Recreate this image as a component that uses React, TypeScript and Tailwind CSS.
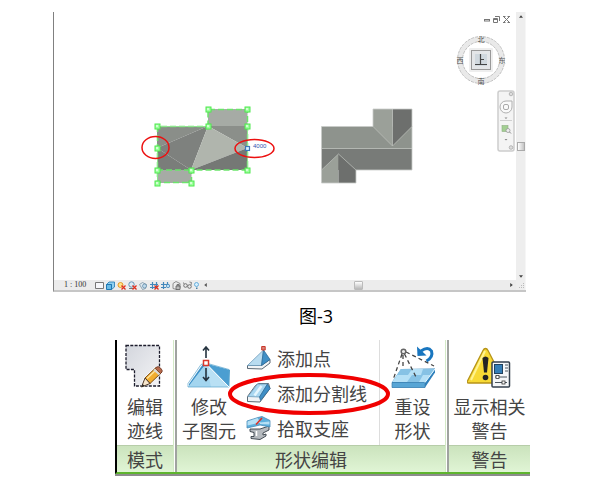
import type { ReactNode } from "react";

const handles = [
  [157, 126],
  [208, 126],
  [208, 109],
  [247, 109],
  [247, 126],
  [247, 170],
  [191, 170],
  [191, 183],
  [157, 183],
  [157, 170],
  [157, 148],
];

function EditedRoof() {
  return (
    <svg viewBox="140 100 136 90" className="h-[90px] w-[136px] shrink-0" fill="none">
      <path d="M208 109h39.500v17.500H208zM157 170h34.500v13H157z" fill="#a6aba5" />
      <path d="M157 126h51l-51 22z" fill="#8a8e89" />
      <path d="M157 148l51-22-17 44z" fill="#7e817e" />
      <path d="M157 148v22h34z" fill="#7a7d7a" />
      <path d="M208 126h39.500v22z" fill="#8b8f8a" />
      <path d="M208 126l39.500 22-56.500 22z" fill="#b0b5ad" />
      <path d="M191 170l56.500-22v22z" fill="#757875" />
      <path
        d="M208 126.500V109.500H247.500V170H191.500V182.500H157.500V126.500H208M157 170h34"
        stroke="#6be56b"
        strokeWidth="1.500"
        strokeDasharray="6 3"
      />
      <path d="M157 126.500h51M247.500 126v44M157.500 148v35" stroke="#8fe58f" strokeWidth="1" />
      {handles.map(([x, y]) => (
        <g key={`${x}-${y}`}>
          <rect x={x - 2} y={y - 2} width="5" height="5" fill="#9dff9d" stroke="#4fe84f" />
          <rect x={x - 1} y={y - 1} width="2" height="2" fill="#d2ffd2" />
        </g>
      ))}
      <rect x="245.500" y="146.500" width="4" height="4" fill="#d9efff" stroke="#3c78b8" strokeWidth="1.200" />
      <text x="253" y="147.500" fontSize="6" fill="#2f56b0" fontFamily="Liberation Sans, sans-serif">
        4000
      </text>
      <ellipse cx="155.500" cy="147.500" rx="13.500" ry="11" stroke="#ec1010" strokeWidth="1.500" />
      <ellipse cx="254.500" cy="148.500" rx="19.500" ry="9" stroke="#ec1010" strokeWidth="1.500" />
    </svg>
  );
}

function FinishedRoof() {
  return (
    <svg viewBox="320 100 94 90" className="h-[90px] w-[94px] shrink-0" fill="none">
      <path d="M321.500 126.500H412v22H321.500z" fill="#8e938d" />
      <path d="M321.500 148.500H412V170H321.500z" fill="#787b78" />
      <path d="M373 109h19.500v37L373 126.500z" fill="#9ba099" />
      <path d="M392.500 109H412v17.500L392.500 146z" fill="#6d6f6d" />
      <path d="M321.500 170l17-16v29h-17z" fill="#9ba099" />
      <path d="M338.500 154l17.500 16v13h-17.500z" fill="#6d6f6d" />
      <path d="M321.500 148.500H412M392.500 109v37M373 126.500l19.500 19.500 19.500-19.500M321.500 170l17-16 17.500 16" stroke="#b9bdb7" strokeWidth=".8" />
      <path d="M373 109H412V170H356V183H321.500V126.500H373z" stroke="#c9cbc9" strokeWidth=".8" />
    </svg>
  );
}

function WindowButtons() {
  return (
    <div className="flex items-center gap-[3px] pr-[6px] text-[#777]">
      <button aria-label="最小化">
        <svg viewBox="0 0 6 7" className="h-[7px] w-[6px]" fill="none" stroke="currentColor">
          <rect x=".5" y="3.500" width="5" height="1.500" />
        </svg>
      </button>
      <button aria-label="还原">
        <svg viewBox="0 0 7 7" className="h-[7px] w-[7px]" fill="none" stroke="currentColor">
          <path d="M.5 2.500h4v4h-4zM2 .5h4.500v4.500M.5 3.500h4" />
        </svg>
      </button>
      <button aria-label="关闭">
        <svg viewBox="0 0 7 7" className="h-[7px] w-[7px]" fill="none" stroke="currentColor">
          <path d="M1 1l5 5M6 1l-5 5M0 .5h2.500M4.500 .5H7M0 6.500h2.500M4.500 6.500H7" />
        </svg>
      </button>
    </div>
  );
}

function ViewCube() {
  return (
    <svg viewBox="0 0 52 52" className="h-[52px] w-[52px]" fontFamily="Noto Sans CJK SC, sans-serif" textAnchor="middle">
      <circle cx="26" cy="26" r="21" fill="none" stroke="#e9e9e9" strokeWidth="5" />
      <circle cx="26" cy="26" r="23.500" fill="none" stroke="#aaa" strokeWidth=".7" strokeDasharray="3 1" />
      <circle cx="26" cy="26" r="18.500" fill="none" stroke="#aaa" strokeWidth=".7" strokeDasharray="3 1" />
      <rect x="14" y="14" width="24" height="24" rx="1" fill="#eee" />
      <rect x="16.500" y="16.500" width="19" height="19" fill="#e4e6e8" stroke="#999" />
      <rect x="20" y="20" width="12" height="12" fill="#d0d8de" />
      <path d="M25.500 20v10.500M20 30.500h12M26 25.500h3" stroke="#444" strokeWidth="1.200" />
      <g fontSize="7" fill="#555">
        <text x="26" y="8">北</text>
        <text x="26" y="50">南</text>
        <text x="5" y="29">西</text>
        <text x="47" y="29">东</text>
      </g>
    </svg>
  );
}

function NavigationBar() {
  return (
    <svg viewBox="0 0 18 62" className="h-[62px] w-[18px]" fill="none">
      <rect x="1" y="1" width="16" height="60" rx="2" fill="#f4f4f4" stroke="#cdcdcd" strokeWidth="1.500" />
      <circle cx="14" cy="4" r="1.800" fill="#ddd" stroke="#aaa" strokeWidth=".8" />
      <circle cx="14" cy="57.500" r="1.800" fill="#ddd" stroke="#aaa" strokeWidth=".8" />
      <path d="M9 11h6v6a6 6 0 1 1-6-6z" fill="#fafafa" stroke="#b0b0b0" />
      <rect x="6.500" y="14.500" width="5" height="5" rx="1.500" stroke="#aaa" />
      <path d="M7.500 27.500h3l-1.500 1.500zM7.500 49h3L9 50.500z" fill="#888" />
      <path d="M3 30.500h12" stroke="#d0d0d0" />
      <rect x="5" y="35.500" width="6" height="6" fill="#a3cf92" stroke="#8dae82" strokeWidth=".6" />
      <circle cx="11" cy="40.500" r="2" fill="#eee" stroke="#999" strokeWidth=".8" />
      <path d="M12.500 42l1.500 1.500" stroke="#888" />
    </svg>
  );
}

const viewControls: { name: string; art: ReactNode }[] = [
  { name: "详细程度", art: <path d="M.5 1.500h8v6h-8z" fill="#f7f7fa" stroke="#777" /> },
  {
    name: "视觉样式",
    art: (
      <>
        <path d="M.5 3.500l2.500-2.500h5.500v5L5.500 8.500v-5z" fill="#8fd0f0" stroke="#1f78b4" strokeWidth=".8" />
        <path d="M.5 3.500h5v5h-5z" fill="#6bbbe6" stroke="#1f78b4" />
      </>
    ),
  },
  {
    name: "日光路径",
    art: (
      <>
        <circle cx="3.500" cy="4" r="2.500" fill="#ffe38a" stroke="#e59a25" />
        <path d="M4.500 4.500l4 4m0-4l-4 4" stroke="#e0301e" strokeWidth="1.300" />
      </>
    ),
  },
  {
    name: "阴影",
    art: (
      <>
        <circle cx="3.500" cy="3.500" r="2.700" fill="#dcecf5" stroke="#6794b5" />
        <path d="M1 7.500h4" stroke="#777" />
        <path d="M4.500 4.500l4 4m0-4l-4 4" stroke="#e0301e" strokeWidth="1.300" />
      </>
    ),
  },
  {
    name: "渲染",
    art: (
      <>
        <path d="M.5 3.500l3-2 4 2-1 4-3 1z" fill="#dfe8ee" stroke="#7893a5" strokeWidth=".8" />
        <circle cx="5.500" cy="5" r="2" fill="#c2dcec" stroke="#5b87a7" strokeWidth=".7" />
      </>
    ),
  },
  {
    name: "裁剪视图",
    art: (
      <>
        <path d="M0 3.500h8M2.500 1v7M0 6.500h7M6.500 1v5" stroke="#4387bb" strokeWidth="1.200" />
        <path d="M4.500 4.500l4 4m0-4l-4 4" stroke="#e0301e" strokeWidth="1.300" />
      </>
    ),
  },
  {
    name: "裁剪区域",
    art: (
      <>
        <path d="M0 3.500h8M2.500 1v7M0 6.500h5M6.500 1v3" stroke="#4387bb" strokeWidth="1.200" />
        <circle cx="7" cy="5" r="1.700" fill="#b9dff5" stroke="#4387bb" strokeWidth=".8" />
      </>
    ),
  },
  {
    name: "锁定",
    art: (
      <>
        <path d="M1 2.500l3-2 4 2v5l-3 1-4-1z" fill="#ececec" stroke="#777" strokeWidth=".8" />
        <path d="M4 5h4v3.500H4zM5 5V3.500h2V5" fill="#bbb" stroke="#555" strokeWidth=".7" />
      </>
    ),
  },
  {
    name: "临时隐藏",
    art: (
      <>
        <circle cx="2.500" cy="4.500" r="1.800" stroke="#666" strokeWidth=".9" />
        <circle cx="6.500" cy="5.500" r="1.800" stroke="#666" strokeWidth=".9" />
        <path d="M1 3l-.5-1.500M8 4l.5-2.500-2-.5" stroke="#777" strokeWidth=".9" />
      </>
    ),
  },
  {
    name: "显示隐藏图元",
    art: (
      <>
        <circle cx="2.500" cy="3.500" r="2" fill="#d4efff" stroke="#4e9fd4" strokeWidth=".8" />
        <path d="M2 6.500h1.500v1.500H2z" fill="#4b80a5" />
      </>
    ),
  },
];

function StatusBar() {
  return (
    <div className="flex h-[10px] items-center bg-[#ececec] pl-[10px]">
      <span className="w-[31px] font-['Liberation_Serif',serif] text-[8px] leading-[10px] whitespace-pre text-[#333]">
        1 : 100
      </span>
      <div className="flex gap-[2px]">
        {viewControls.map((c) => (
          <button key={c.name} aria-label={c.name}>
            <svg viewBox="0 0 9 9" className="h-[9px] w-[9px]" fill="none">
              {c.art}
            </svg>
          </button>
        ))}
      </div>
      <div className="ml-px flex flex-1 items-center justify-between pr-[3px]">
        <svg viewBox="0 0 4 6" className="h-[4px] w-[3px]">
          <path d="M4 0v6L0 3z" fill="#555" />
        </svg>
        <span className="h-[9px] w-[9px] rounded-[1px] border border-[#bbb] bg-linear-to-b from-white to-[#b8b8b8]" />
        <svg viewBox="0 0 4 6" className="h-[4px] w-[3px]">
          <path d="M0 0v6l4-3z" fill="#444" />
        </svg>
      </div>
    </div>
  );
}

function DrawingWindow() {
  return (
    <section className="mr-[74px] ml-[53px] border-b-2 border-l border-b-[#c6c6c6] border-l-[#808080]">
      <div className="flex">
        <div className="flex min-w-0 flex-1 flex-col">
          <div className="flex h-[268px] items-start">
            <div className="flex gap-[44px] pt-[88px] pl-[86px]">
              <EditedRoof />
              <FinishedRoof />
            </div>
            <div className="ml-auto flex flex-col items-end pt-[4px]">
              <WindowButtons />
              <div className="pt-[11px] pr-[9px]">
                <ViewCube />
              </div>
              <div className="pt-[4px] pr-px">
                <NavigationBar />
              </div>
            </div>
          </div>
          <StatusBar />
        </div>
        <div className="flex w-[10px] flex-col items-center border-r border-[#f6f6f6] bg-[#eee] pt-[3px] pb-[2px]">
          <svg viewBox="0 0 6 4" className="h-[3px] w-[4px]">
            <path d="M0 4h6L3 0z" fill="#444" />
          </svg>
          <span className="mt-[124px] h-[9px] w-[8px] border border-[#aaa] bg-linear-to-r from-white to-[#c4c4c4]" />
          <div className="mt-auto flex flex-col items-center gap-[4px]">
            <svg viewBox="0 0 6 4" className="h-[3px] w-[4px]">
              <path d="M0 0h6L3 4z" fill="#444" />
            </svg>
            <svg viewBox="0 0 6 6" className="h-[6px] w-[6px]" stroke="#bbb" strokeDasharray="1 1">
              <path d="M5.500 1v5M3.500 3v3M1.500 5v1" />
            </svg>
          </div>
        </div>
      </div>
    </section>
  );
}

function EditBoundaryIcon() {
  return (
    <svg viewBox="121 342 46 48" className="h-[48px] w-[46px]" fill="none">
      <defs>
        <linearGradient id="sheet" x1="0" y1="0" x2="1" y2="1">
          <stop offset="0" stopColor="#d3d6dd" />
          <stop offset="1" stopColor="#f4f4f6" />
        </linearGradient>
      </defs>
      <path d="M125 345.500h33.500V386H133.500V369.500H125z" fill="url(#sheet)" stroke="#1c1c2c" strokeWidth="1.300" strokeDasharray="3 1.300" />
      <path d="M140 388l2-9 12-12q4 0 7 5l-12 12z" fill="#fff" />
      <path d="M144 378l11-10.500 5.500 5L149 383.500z" fill="#f2ad2f" stroke="#7b4a12" />
      <path d="M146 378.500l10-9.500" stroke="#ffe39a" strokeWidth="1.500" />
      <path d="M153 369.500l5.500 5" stroke="#d5d8dc" strokeWidth="2" />
      <path d="M155 367.500q2-2 4.500.5t1.500 4l-1.500 1.500-5-5z" fill="#b86a4c" stroke="#6c3929" strokeWidth=".8" />
      <path d="M140.500 387l3.500-9 5 5.500z" fill="#f7e6cd" stroke="#4c3726" />
      <path d="M140.500 387l1.200-3 1.800 1.900z" fill="#222" />
    </svg>
  );
}

function SubElementIcon() {
  return (
    <svg viewBox="186 342 46 48" className="h-[48px] w-[46px]" fill="none">
      <path d="M203 364l-14 20v3l17-23z" fill="#3c91c8" />
      <path d="M206 363.500l-18 23.500h31z" fill="#a3d5ef" />
      <path d="M206 363.500l24 6.500-1 17z" fill="#4b9ed1" />
      <path d="M206 363.500L229 387h-18z" fill="#b9e0f4" />
      <path d="M188 387h41v-17.500L206 363l-5 1.500-13 19z" stroke="#5aa3cc" strokeWidth=".7" />
      <path d="M206 363.500L229 387" stroke="#fff" />
      <path d="M206 358v-10M203 350.500l3-3.500 3 3.500M206 368v12M203 377l3 3.500 3-3.500" stroke="#25333f" strokeWidth="1.600" />
      <rect x="203.500" y="360.500" width="5" height="5" fill="#fff" stroke="#db382c" strokeWidth="1.500" />
    </svg>
  );
}

function AddPointIcon() {
  return (
    <svg viewBox="246 345 26 26" className="h-[26px] w-[26px]" fill="none" strokeLinejoin="round">
      <path d="M247.500 365.500h14l8.500-6v3.500l-8 6-14.500-.5z" fill="#f2f4f6" stroke="#4a5864" strokeWidth=".9" />
      <path d="M263.500 350l-16 15.500h14z" fill="#b9dcf0" stroke="#6f9cbb" strokeWidth=".8" />
      <path d="M263.500 350l-2 15.500 8.500-6z" fill="#3f8fc6" stroke="#2c6c9c" strokeWidth=".8" />
      <rect x="261.700" y="346.500" width="3.500" height="3.500" fill="#d98277" stroke="#c9372b" />
    </svg>
  );
}

function SplitLineIcon() {
  return (
    <svg viewBox="246 381 26 26" className="h-[26px] w-[26px]" fill="none" strokeLinejoin="round">
      <path d="M247.500 397.500l8-11 3-2h10l1.500 5-10 13.500-12.500-.5z" fill="#eff3f6" stroke="#4a5864" strokeWidth=".9" />
      <path d="M257.500 385h10l-8 13-11.500-.5z" fill="#a9d7f1" stroke="#6c9cba" strokeWidth=".8" />
      <path d="M267.500 385l2.500 4.500-9.500 12-1-3.500z" fill="#3f8fc6" stroke="#2c6c9c" strokeWidth=".8" />
      <path d="M261.500 387l-7 9.500" stroke="#e5f6fe" strokeWidth="2.500" />
    </svg>
  );
}

function PickSupportIcon() {
  return (
    <svg viewBox="246 414 26 26" className="h-[26px] w-[26px]" fill="none" strokeLinejoin="round">
      <path d="M250 428h10l9-3v4l-6 3v2l3-1v2l-6 3.500-9-1v-2h3v-4l-4-1z" fill="#b5babf" stroke="#343d46" strokeWidth=".9" />
      <path d="M256.500 430v5" stroke="#fff" strokeWidth="1.500" />
      <path d="M247 420l11-3.500 4-1 8 4v6.500l-10-2-13 3z" fill="#5eb0dd" stroke="#4a8cb6" strokeWidth=".8" />
      <path d="M247.500 420.500l10-3.500 3 4.500-13 3zM260 421.500l9.500-1v3l-9.500-.5z" fill="#b6e0f5" />
      <path d="M256 423.500l6-6.500" stroke="#e02f21" strokeWidth="1.500" />
    </svg>
  );
}

function ResetShapeIcon() {
  return (
    <svg viewBox="392 342 46 48" className="h-[48px] w-[46px]" fill="none">
      <path d="M394 382l9-13 34-.5v4l-10 15h-33z" fill="#2f80bb" />
      <path d="M394 382l9-13h34l-10 13.500z" fill="#b5e0f6" />
      <path d="M399 375l4-6h11l-4 6zM414 375l-5 7h12l4-7zM425 369l-2 6h9l5-6z" fill="#86c2e5" />
      <path d="M394 382.500h33v5h-33z" fill="#57a5d5" stroke="#3b80b0" strokeWidth=".7" />
      <path d="M427 382.500l10-13.500" stroke="#e1f6ff" />
      <path d="M404 354l-9 26M406.500 354l12 24M408 352l28 14M405 355v14" stroke="#444" strokeWidth="1.300" strokeDasharray="4 3" />
      <circle cx="405.500" cy="351.500" r="2.300" fill="#eee" stroke="#666" strokeWidth="1.500" />
      <path d="M423 351q7-5 10.500 0 2 6-5 10" stroke="#1976bf" strokeWidth="3" />
      <path d="M419 346.500l.5 9.500 9-.5z" fill="#1976bf" />
    </svg>
  );
}

function WarningIcon() {
  return (
    <svg viewBox="468 342 46 48" className="h-[48px] w-[46px]" fill="none">
      <path d="M486.500 348.500q1.500 0 2.500 2l16 31q0 1.500-1.500 1.500h-34q-2 0-1-2l15.500-30.500q1-2 2.500-2z" fill="#f8da35" stroke="#b69318" strokeWidth="1.300" />
      <path d="M486 351l-14 29" stroke="#fff391" strokeWidth="2" />
      <path d="M483.500 358q3-3 6 0l-1.500 14.500h-3z" fill="#242424" />
      <circle cx="486.500" cy="377.500" r="2.800" fill="#242424" />
      <rect x="493" y="362" width="17.500" height="25" rx="1" fill="#f5f7f9" stroke="#34404d" strokeWidth="1.500" />
      <rect x="495.500" y="364.500" width="8" height="9" fill="#347eb7" stroke="#22425e" />
      <path d="M506 365h3M506 368h3M506 371h3M496 377h12M496 382.500h12" stroke="#4a5661" />
      <rect x="497" y="375.500" width="3" height="3" fill="#fff" stroke="#333" strokeWidth=".8" />
      <rect x="503" y="381" width="3" height="3" fill="#fff" stroke="#333" strokeWidth=".8" />
    </svg>
  );
}

function LargeButton({ icon, lines }: { icon: ReactNode; lines: string[] }) {
  return (
    <button className="flex flex-col items-center pt-[2px]">
      {icon}
      <span className="mt-1 flex flex-col">
        {lines.map((line) => (
          <span key={line}>{line}</span>
        ))}
      </span>
    </button>
  );
}

function Panel({ title, className, children }: { title: string; className: string; children: ReactNode }) {
  return (
    <section className={`flex flex-col ${className}`}>
      <div className="flex h-[105px] justify-center">{children}</div>
      <h2 className="border-t border-[#b7cda9] bg-linear-to-b from-[#cbe3bd] to-[#e0f5d5] text-center leading-[26px]">
        {title}
      </h2>
    </section>
  );
}

function PanelDivider() {
  return <div className="w-1 border-r-2 border-l border-r-[#a0a3a0] border-l-[#d3eac7] bg-white" />;
}

function Ribbon() {
  return (
    <div className="mr-[70px] ml-[115px] border-b-2 border-[#8c8c8c] font-['Noto_Sans_CJK_SC',sans-serif] text-[18px] leading-[24px] text-[#444]">
      <div className="flex border-b-2 border-l-2 border-b-[#5eb52e] border-l-black">
        <Panel title="模式" className="w-[56px]">
          <LargeButton icon={<EditBoundaryIcon />} lines={["编辑", "迹线"]} />
        </Panel>
        <PanelDivider />
        <Panel title="形状编辑" className="min-w-0 flex-1">
          <div className="flex w-full">
            <div className="flex w-[64px] shrink-0 justify-center">
              <LargeButton icon={<SubElementIcon />} lines={["修改", "子图元"]} />
            </div>
            <div className="flex flex-1 flex-col pl-[5px]">
              <button className="flex h-[35px] items-center gap-[5px]">
                <AddPointIcon />
                添加点
              </button>
              <button className="relative flex h-[35px] items-center gap-[5px]">
                <SplitLineIcon />
                添加分割线
                <svg viewBox="0 0 164 44" className="absolute -top-1 -left-5 h-[44px] w-[164px]" fill="none">
                  <ellipse cx="83" cy="23" rx="79" ry="19" stroke="#f00000" strokeWidth="4" />
                </svg>
              </button>
              <button className="flex h-[35px] items-center gap-[5px]">
                <PickSupportIcon />
                拾取支座
              </button>
            </div>
            <div className="flex w-[66px] shrink-0 justify-center border-l border-[#ddd]">
              <LargeButton icon={<ResetShapeIcon />} lines={["重设", "形状"]} />
            </div>
          </div>
        </Panel>
        <PanelDivider />
        <Panel title="警告" className="w-[81px]">
          <LargeButton icon={<WarningIcon />} lines={["显示相关", "警告"]} />
        </Panel>
      </div>
    </div>
  );
}

export default function App() {
  return (
    <main className="min-h-screen bg-white pt-3">
      <DrawingWindow />
      <p className="py-[12px] pl-8 text-center font-['Open_Sans','Noto_Sans_CJK_SC',sans-serif] text-[18px] leading-[24px] text-black">
        图-3
      </p>
      <Ribbon />
    </main>
  );
}
